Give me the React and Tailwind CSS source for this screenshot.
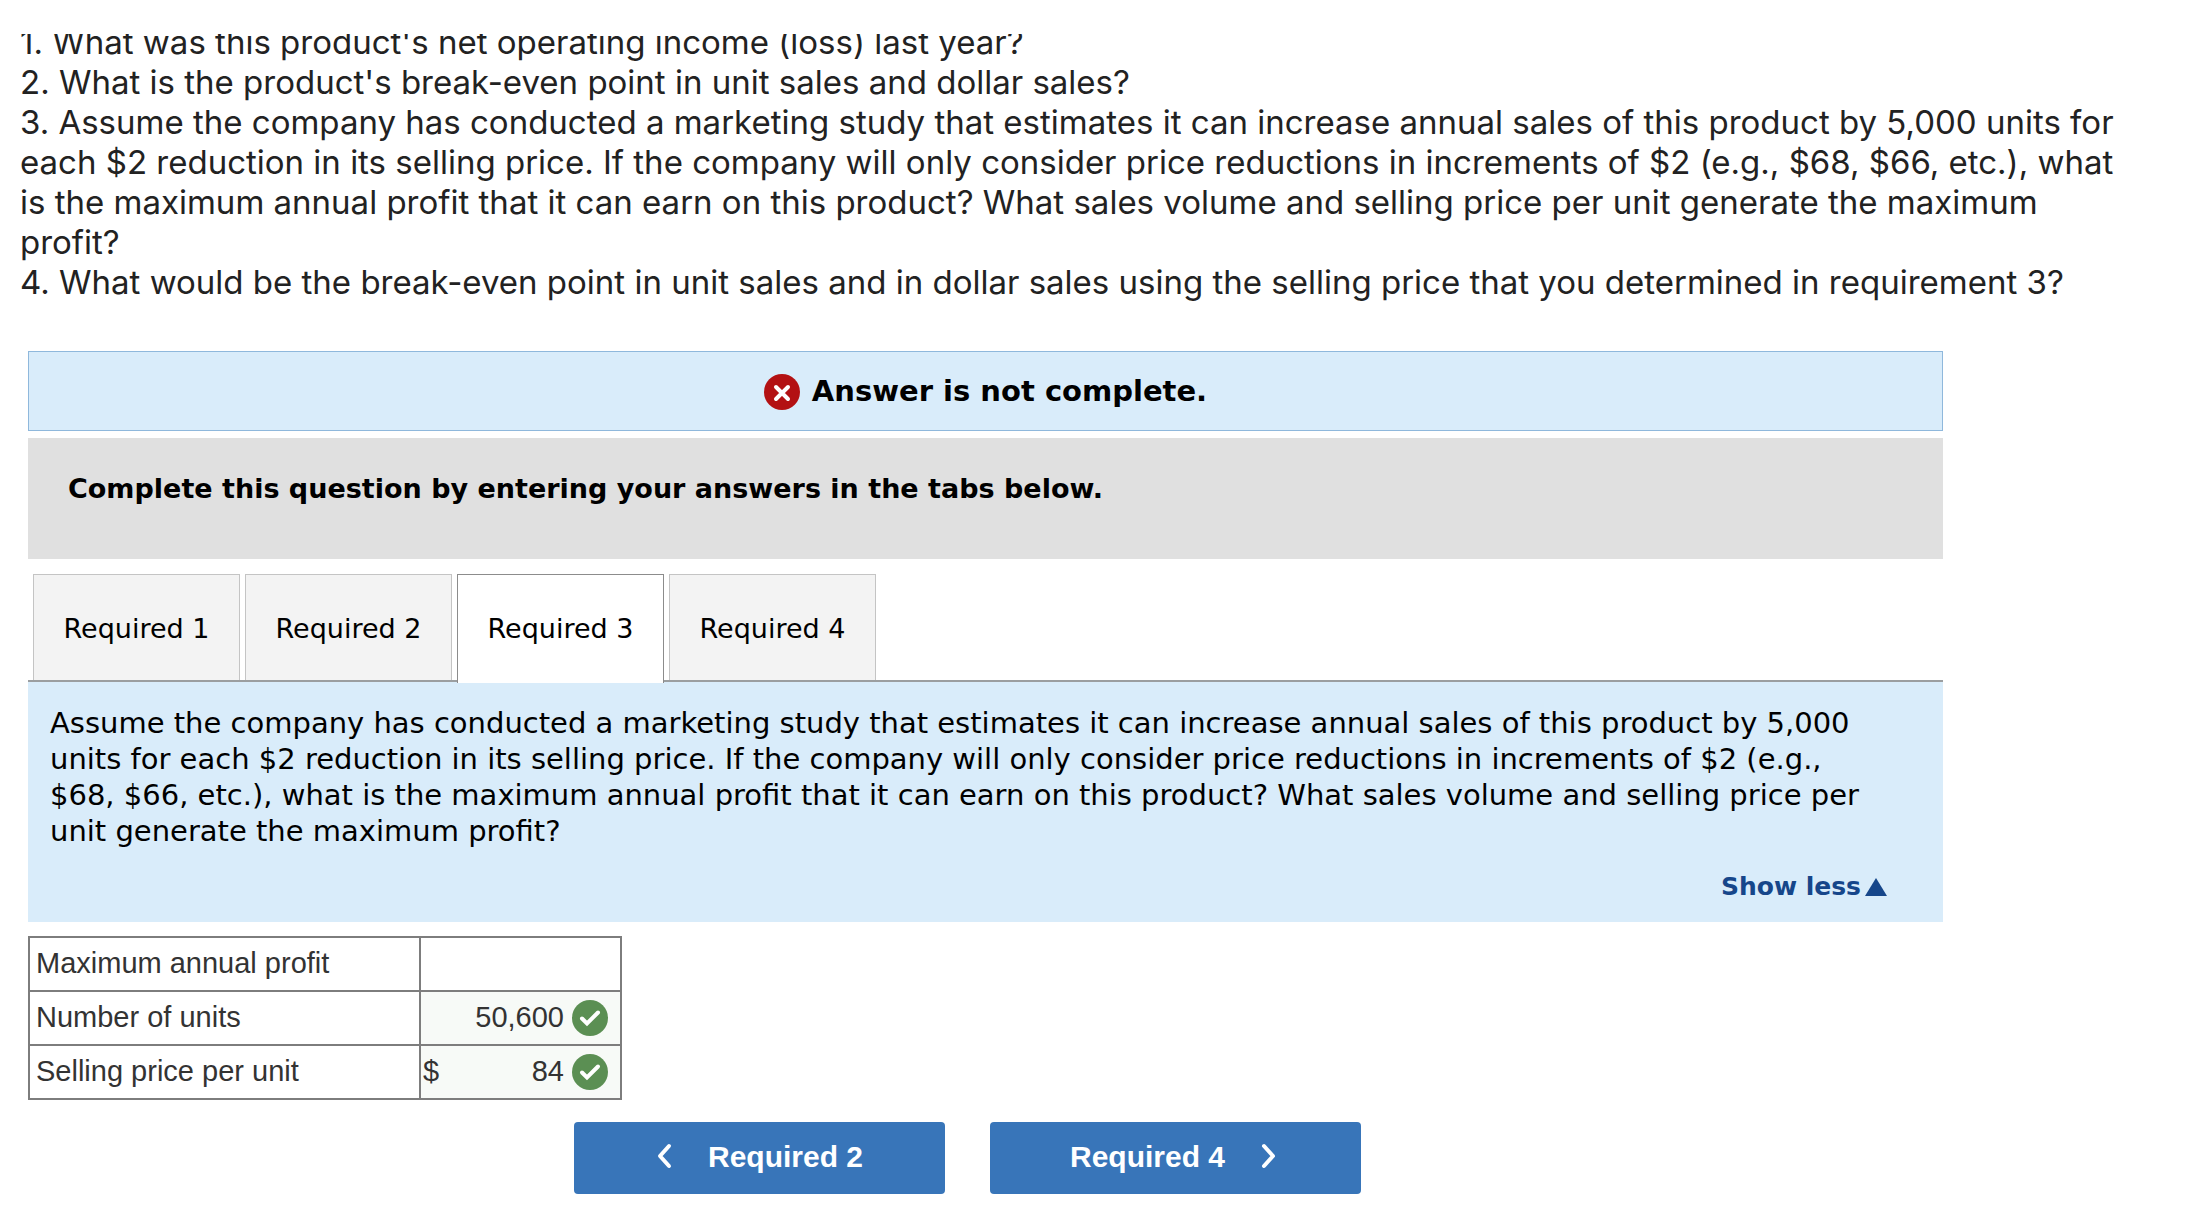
import React from "react";

const TABS = ["Required 1", "Required 2", "Required 3", "Required 4"];

const ROWS = [
  { id: "profit", label: "Maximum annual profit", prefix: "", value: "", correct: false },
  { id: "units", label: "Number of units", prefix: "", value: "50,600", correct: true },
  { id: "price", label: "Selling price per unit", prefix: "$", value: "84", correct: true },
];

function CheckIcon() {
  return (
    <svg viewBox="0 0 36 36" className="h-9 w-9 shrink-0" aria-label="Correct">
      <circle cx="18" cy="18" r="18" fill="#5b8f53" />
      <path
        d="M10 18.500l5 5L26 12.500"
        fill="none"
        stroke="#fff"
        strokeWidth="4"
        strokeLinecap="round"
      />
    </svg>
  );
}

function CrossIcon() {
  return (
    <svg viewBox="0 0 36 36" className="h-9 w-9 shrink-0" aria-hidden="true">
      <circle cx="18" cy="18" r="18" fill="#b31113" />
      <path
        d="M12 13l12 12M24 13L12 25"
        fill="none"
        stroke="#fff"
        strokeWidth="4"
        strokeLinecap="round"
      />
    </svg>
  );
}

function Chevron({ d }) {
  return (
    <svg viewBox="0 0 16 26" className="h-[26px] w-4" aria-hidden="true">
      <path d={d} fill="none" stroke="#fff" strokeWidth="4" strokeLinecap="round" strokeLinejoin="round" />
    </svg>
  );
}

export default function App() {
  const [active, setActive] = React.useState(2);
  const [expanded, setExpanded] = React.useState(true);

  return (
    <main className="bg-white pt-[34px] pb-4 font-['DejaVu_Sans',sans-serif] text-black">
      {/* Question list, scrolled so that its first line is partly cut off */}
      <section className="flex h-[276px] flex-col justify-end overflow-hidden pb-2 pl-5 font-[Inter,sans-serif] text-[33px] leading-[40px] whitespace-nowrap text-[#222]">
        <p>1. What was this product's net operating income (loss) last year?</p>
        <p>2. What is the product's break-even point in unit sales and dollar sales?</p>
        <p>
          3. Assume the company has conducted a marketing study that estimates it can increase annual sales of this product by 5,000 units for
          <br />
          each $2 reduction in its selling price. If the company will only consider price reductions in increments of $2 (e.g., $68, $66, etc.), what
          <br />
          is the maximum annual profit that it can earn on this product? What sales volume and selling price per unit generate the maximum
          <br />
          profit?
        </p>
        <p>4. What would be the break-even point in unit sales and in dollar sales using the selling price that you determined in requirement 3?</p>
      </section>

      <div className="mt-[41px] mr-[254px] ml-7">
        <div className="flex h-20 items-center justify-center gap-3 border border-[#8fb8dc] bg-[#d9ecfa] pt-0.5 text-[29px] font-bold">
          <CrossIcon />
          <span>Answer is not complete.</span>
        </div>

        <div className="mt-[7px] h-[121px] bg-[#e0e0e0] px-10 pt-8 text-[27px] leading-[38px] font-bold">
          Complete this question by entering your answers in the tabs below.
        </div>

        <div className="mt-[15px] flex gap-[5px] border-b-2 border-[#9b9ea0] pl-[5px]" role="tablist">
          {TABS.map((tab, i) => (
            <button
              key={tab}
              type="button"
              role="tab"
              aria-selected={active === i}
              onClick={() => setActive(i)}
              className={
                active === i
                  ? "-mb-[3px] h-[109px] w-[207px] border border-b-0 border-[#8c8c8c] bg-white text-[27px]"
                  : "h-[106px] w-[207px] border border-b-0 border-[#c4c4c4] bg-[#f3f3f3] pt-1 text-[27px]"
              }
            >
              {tab}
            </button>
          ))}
        </div>

        <div className="bg-[#d9ecfa] px-[22px] pt-[23px] pb-4">
          {expanded && (
            <p className="text-[29px] leading-9 whitespace-nowrap">
              Assume the company has conducted a marketing study that estimates it can increase annual sales of this product by 5,000
              <br />
              units for each $2 reduction in its selling price. If the company will only consider price reductions in increments of $2 (e.g.,
              <br />
              $68, $66, etc.), what is the maximum annual profit that it can earn on this product? What sales volume and selling price per
              <br />
              unit generate the maximum profit?
            </p>
          )}
          <div className="mt-[19px] flex justify-end pr-[34px]">
            <button
              type="button"
              onClick={() => setExpanded(!expanded)}
              className="flex items-center gap-1 text-[25px] leading-[38px] font-bold text-[#16468a]"
            >
              {expanded ? "Show less" : "Show more"}
              <svg viewBox="0 0 22 18" className="h-[18px] w-[22px]" aria-hidden="true">
                <path d="M11 0l11 18H0z" fill="#16468a" />
              </svg>
            </button>
          </div>
        </div>

        <table className="mt-[14px] border-collapse font-['Liberation_Sans',Arial,sans-serif] text-[29px] text-[#333]">
          <tbody>
            {ROWS.map((row) => (
              <tr key={row.id} className="h-[54px]">
                <th scope="row" className="w-[391px] border-2 border-[#7d7d7d] px-1.5 text-left font-normal">
                  <label htmlFor={row.id}>{row.label}</label>
                </th>
                <td className={row.correct ? "w-[201px] border-2 border-[#7d7d7d] bg-[#f7faf7] p-0" : "w-[201px] border-2 border-[#7d7d7d] p-0"}>
                  <div className="flex items-center gap-2 pr-3 pl-0.5">
                    <span>{row.prefix}</span>
                    <input
                      id={row.id}
                      type="text"
                      defaultValue={row.value}
                      className="w-0 min-w-0 flex-1 bg-transparent text-right outline-none"
                    />
                    {row.correct && <CheckIcon />}
                  </div>
                </td>
              </tr>
            ))}
          </tbody>
        </table>

        <div className="mt-[22px] flex justify-center gap-[45px] pr-9 font-['Liberation_Sans',Arial,sans-serif] text-[30px] font-bold text-white">
          <button type="button" className="flex h-[72px] w-[371px] items-center justify-center gap-9 rounded-[4px] bg-[#3875b9] pb-1">
            <Chevron d="M13 3L4 13l9 10" />
            Required 2
          </button>
          <button type="button" className="flex h-[72px] w-[371px] items-center justify-center gap-9 rounded-[4px] bg-[#3875b9] pr-1 pb-1">
            Required 4
            <Chevron d="M3 3l9 10-9 10" />
          </button>
        </div>
      </div>
    </main>
  );
}
